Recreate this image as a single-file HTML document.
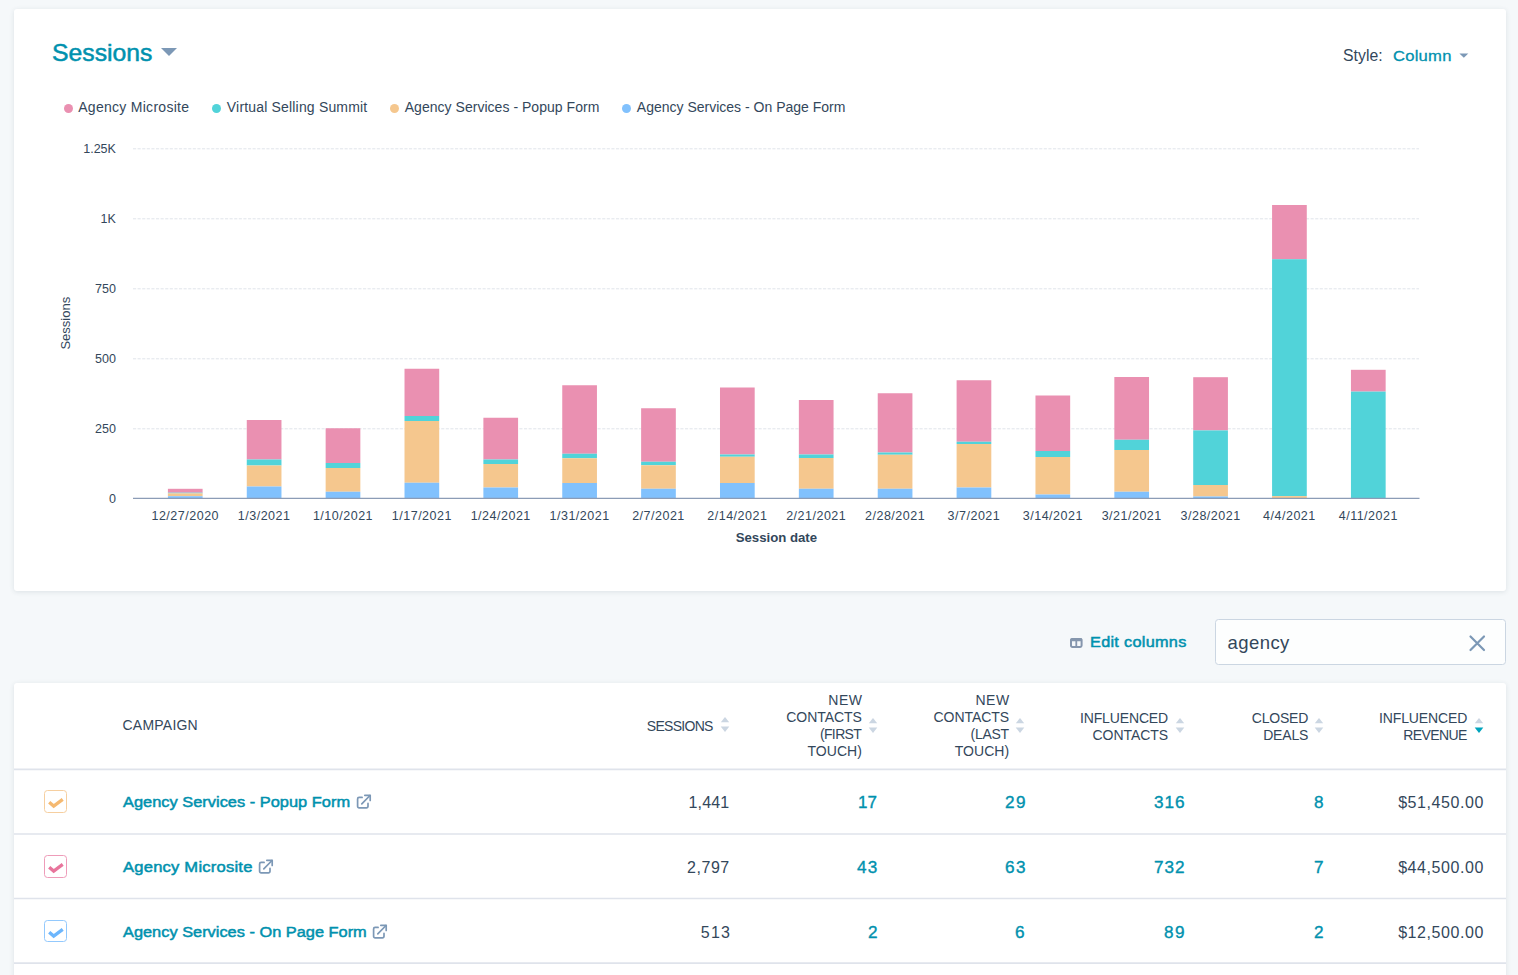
<!DOCTYPE html>
<html><head><meta charset="utf-8"><title>Sessions</title>
<style>
*{box-sizing:border-box;margin:0;padding:0}
html,body{width:1518px;height:975px;overflow:hidden;background:#f5f8fa;font-family:"Liberation Sans",sans-serif;color:#33475b}
.abs{position:absolute}
.t{white-space:nowrap;line-height:20px}
.card{position:absolute;background:#fff;border-radius:3px;box-shadow:0 1px 5px rgba(45,62,80,.12)}
.dot{width:9px;height:9px;border-radius:50%}
.ax{font-size:12.5px;fill:#33475b;font-family:"Liberation Sans",sans-serif}
.xl{letter-spacing:.5px}
.hr{left:14px;width:1492px;height:1.6px;background:#dfe3eb}
.cb{width:23.2px;height:22.8px;border:1.4px solid;border-radius:3.5px;background:#fff}
</style></head><body>
<div class="card" style="left:14px;top:9px;width:1492px;height:581.5px"></div>
<div class="abs t" style="left:52.31px;top:40px;font-size:23.4px;line-height:26px;transform:scaleX(1.0578);transform-origin:0 50%;letter-spacing:0.000px;font-weight:normal;color:#0091ae;-webkit-text-stroke:.5px #0091ae">Sessions</div>
<svg class="abs" style="left:160px;top:47px" width="18" height="10" viewBox="0 0 18 10"><path d="M1 1.1 H17 L9 9 Z" fill="#7c98b6"/></svg>
<div class="abs t" style="left:1343.07px;top:47px;font-size:15.8px;line-height:17px;letter-spacing:0.018px;font-weight:normal;color:#33475b;">Style:</div>
<div class="abs t" style="left:1392.64px;top:47px;font-size:15.5px;line-height:17px;transform:scaleX(1.0700);transform-origin:0 50%;letter-spacing:0.227px;font-weight:normal;color:#0091ae;-webkit-text-stroke:.3px #0091ae">Column</div>
<svg class="abs" style="left:1459px;top:53px" width="10" height="6" viewBox="0 0 10 6"><path d="M0.4 0.4 H9.3 L4.85 4.8 Z" fill="#7c98b6"/></svg>

<div class="abs dot" style="left:63.7px;top:103.5px;background:#ea90b1"></div>
<div class="abs t" style="left:78.24px;top:99px;font-size:14px;line-height:16px;letter-spacing:0.279px;font-weight:normal;color:#33475b;">Agency Microsite</div>
<div class="abs dot" style="left:212px;top:103.5px;background:#51d3d9"></div>
<div class="abs t" style="left:226.84px;top:99px;font-size:14px;line-height:16px;letter-spacing:0.176px;font-weight:normal;color:#33475b;">Virtual Selling Summit</div>
<div class="abs dot" style="left:390px;top:103.5px;background:#f5c78e"></div>
<div class="abs t" style="left:404.74px;top:99px;font-size:14px;line-height:16px;letter-spacing:0.031px;font-weight:normal;color:#33475b;">Agency Services - Popup Form</div>
<div class="abs dot" style="left:622px;top:103.5px;background:#81c1fd"></div>
<div class="abs t" style="left:636.84px;top:99px;font-size:14px;line-height:16px;letter-spacing:0.002px;font-weight:normal;color:#33475b;">Agency Services - On Page Form</div>

<svg class="abs" style="left:0;top:0" width="1518" height="600" viewBox="0 0 1518 600">
<line x1="133" x2="1419" y1="148.8" y2="148.8" stroke="#dde1e9" stroke-width="0.9" stroke-dasharray="3.1 1.5"/>
<line x1="133" x2="1419" y1="218.8" y2="218.8" stroke="#dde1e9" stroke-width="0.9" stroke-dasharray="3.1 1.5"/>
<line x1="133" x2="1419" y1="288.8" y2="288.8" stroke="#dde1e9" stroke-width="0.9" stroke-dasharray="3.1 1.5"/>
<line x1="133" x2="1419" y1="358.8" y2="358.8" stroke="#dde1e9" stroke-width="0.9" stroke-dasharray="3.1 1.5"/>
<line x1="133" x2="1419" y1="428.8" y2="428.8" stroke="#dde1e9" stroke-width="0.9" stroke-dasharray="3.1 1.5"/>
<text x="115.9" y="152.9" text-anchor="end" class="ax">1.25K</text>
<text x="115.9" y="222.9" text-anchor="end" class="ax">1K</text>
<text x="115.9" y="292.9" text-anchor="end" class="ax">750</text>
<text x="115.9" y="362.9" text-anchor="end" class="ax">500</text>
<text x="115.9" y="432.9" text-anchor="end" class="ax">250</text>
<text x="115.9" y="502.9" text-anchor="end" class="ax">0</text>
<rect x="167.90" y="488.80" width="34.7" height="3.90" fill="#ea90b1"/>
<rect x="167.90" y="492.70" width="34.7" height="0.70" fill="#51d3d9"/>
<rect x="167.90" y="493.40" width="34.7" height="2.80" fill="#f5c78e"/>
<rect x="167.90" y="496.20" width="34.7" height="1.80" fill="#81c1fd"/>
<text x="185.25" y="519.9" text-anchor="middle" class="ax xl">12/27/2020</text>
<rect x="246.77" y="420.00" width="34.7" height="39.50" fill="#ea90b1"/>
<rect x="246.77" y="459.50" width="34.7" height="6.00" fill="#51d3d9"/>
<rect x="246.77" y="465.50" width="34.7" height="21.00" fill="#f5c78e"/>
<rect x="246.77" y="486.50" width="34.7" height="11.50" fill="#81c1fd"/>
<text x="264.12" y="519.9" text-anchor="middle" class="ax xl">1/3/2021</text>
<rect x="325.64" y="428.25" width="34.7" height="34.75" fill="#ea90b1"/>
<rect x="325.64" y="463.00" width="34.7" height="5.00" fill="#51d3d9"/>
<rect x="325.64" y="468.00" width="34.7" height="23.75" fill="#f5c78e"/>
<rect x="325.64" y="491.75" width="34.7" height="6.25" fill="#81c1fd"/>
<text x="342.99" y="519.9" text-anchor="middle" class="ax xl">1/10/2021</text>
<rect x="404.51" y="368.75" width="34.7" height="47.25" fill="#ea90b1"/>
<rect x="404.51" y="416.00" width="34.7" height="5.00" fill="#51d3d9"/>
<rect x="404.51" y="421.00" width="34.7" height="61.75" fill="#f5c78e"/>
<rect x="404.51" y="482.75" width="34.7" height="15.25" fill="#81c1fd"/>
<text x="421.86" y="519.9" text-anchor="middle" class="ax xl">1/17/2021</text>
<rect x="483.38" y="417.75" width="34.7" height="41.75" fill="#ea90b1"/>
<rect x="483.38" y="459.50" width="34.7" height="4.50" fill="#51d3d9"/>
<rect x="483.38" y="464.00" width="34.7" height="23.50" fill="#f5c78e"/>
<rect x="483.38" y="487.50" width="34.7" height="10.50" fill="#81c1fd"/>
<text x="500.73" y="519.9" text-anchor="middle" class="ax xl">1/24/2021</text>
<rect x="562.25" y="385.25" width="34.7" height="68.50" fill="#ea90b1"/>
<rect x="562.25" y="453.75" width="34.7" height="4.50" fill="#51d3d9"/>
<rect x="562.25" y="458.25" width="34.7" height="24.75" fill="#f5c78e"/>
<rect x="562.25" y="483.00" width="34.7" height="15.00" fill="#81c1fd"/>
<text x="579.60" y="519.9" text-anchor="middle" class="ax xl">1/31/2021</text>
<rect x="641.12" y="408.25" width="34.7" height="53.50" fill="#ea90b1"/>
<rect x="641.12" y="461.75" width="34.7" height="3.50" fill="#51d3d9"/>
<rect x="641.12" y="465.25" width="34.7" height="23.50" fill="#f5c78e"/>
<rect x="641.12" y="488.75" width="34.7" height="9.25" fill="#81c1fd"/>
<text x="658.47" y="519.9" text-anchor="middle" class="ax xl">2/7/2021</text>
<rect x="719.99" y="387.50" width="34.7" height="67.00" fill="#ea90b1"/>
<rect x="719.99" y="454.50" width="34.7" height="2.25" fill="#51d3d9"/>
<rect x="719.99" y="456.75" width="34.7" height="26.25" fill="#f5c78e"/>
<rect x="719.99" y="483.00" width="34.7" height="15.00" fill="#81c1fd"/>
<text x="737.34" y="519.9" text-anchor="middle" class="ax xl">2/14/2021</text>
<rect x="798.86" y="400.00" width="34.7" height="54.50" fill="#ea90b1"/>
<rect x="798.86" y="454.50" width="34.7" height="3.50" fill="#51d3d9"/>
<rect x="798.86" y="458.00" width="34.7" height="30.75" fill="#f5c78e"/>
<rect x="798.86" y="488.75" width="34.7" height="9.25" fill="#81c1fd"/>
<text x="816.21" y="519.9" text-anchor="middle" class="ax xl">2/21/2021</text>
<rect x="877.73" y="393.25" width="34.7" height="59.25" fill="#ea90b1"/>
<rect x="877.73" y="452.50" width="34.7" height="2.25" fill="#51d3d9"/>
<rect x="877.73" y="454.75" width="34.7" height="34.00" fill="#f5c78e"/>
<rect x="877.73" y="488.75" width="34.7" height="9.25" fill="#81c1fd"/>
<text x="895.08" y="519.9" text-anchor="middle" class="ax xl">2/28/2021</text>
<rect x="956.60" y="380.25" width="34.7" height="61.50" fill="#ea90b1"/>
<rect x="956.60" y="441.75" width="34.7" height="2.25" fill="#51d3d9"/>
<rect x="956.60" y="444.00" width="34.7" height="43.50" fill="#f5c78e"/>
<rect x="956.60" y="487.50" width="34.7" height="10.50" fill="#81c1fd"/>
<text x="973.95" y="519.9" text-anchor="middle" class="ax xl">3/7/2021</text>
<rect x="1035.47" y="395.50" width="34.7" height="55.50" fill="#ea90b1"/>
<rect x="1035.47" y="451.00" width="34.7" height="6.00" fill="#51d3d9"/>
<rect x="1035.47" y="457.00" width="34.7" height="37.50" fill="#f5c78e"/>
<rect x="1035.47" y="494.50" width="34.7" height="3.50" fill="#81c1fd"/>
<text x="1052.82" y="519.9" text-anchor="middle" class="ax xl">3/14/2021</text>
<rect x="1114.34" y="377.00" width="34.7" height="62.75" fill="#ea90b1"/>
<rect x="1114.34" y="439.75" width="34.7" height="10.25" fill="#51d3d9"/>
<rect x="1114.34" y="450.00" width="34.7" height="41.75" fill="#f5c78e"/>
<rect x="1114.34" y="491.75" width="34.7" height="6.25" fill="#81c1fd"/>
<text x="1131.69" y="519.9" text-anchor="middle" class="ax xl">3/21/2021</text>
<rect x="1193.21" y="377.20" width="34.7" height="53.20" fill="#ea90b1"/>
<rect x="1193.21" y="430.40" width="34.7" height="54.60" fill="#51d3d9"/>
<rect x="1193.21" y="485.00" width="34.7" height="11.50" fill="#f5c78e"/>
<rect x="1193.21" y="496.50" width="34.7" height="1.50" fill="#81c1fd"/>
<text x="1210.56" y="519.9" text-anchor="middle" class="ax xl">3/28/2021</text>
<rect x="1272.08" y="205.00" width="34.7" height="54.20" fill="#ea90b1"/>
<rect x="1272.08" y="259.20" width="34.7" height="236.90" fill="#51d3d9"/>
<rect x="1272.08" y="496.10" width="34.7" height="1.90" fill="#f5c78e"/>
<text x="1289.43" y="519.9" text-anchor="middle" class="ax xl">4/4/2021</text>
<rect x="1350.95" y="369.80" width="34.7" height="21.80" fill="#ea90b1"/>
<rect x="1350.95" y="391.60" width="34.7" height="106.40" fill="#51d3d9"/>
<text x="1368.30" y="519.9" text-anchor="middle" class="ax xl">4/11/2021</text>
<line x1="133" x2="1419.5" y1="498.4" y2="498.4" stroke="#8c9cb6" stroke-width="1.1"/>
<text transform="translate(70,323.2) rotate(-90)" text-anchor="middle" class="ax" style="font-size:13px">Sessions</text>
</svg>
<div class="abs t" style="left:735.67px;top:530px;font-size:13.2px;line-height:15px;letter-spacing:0.008px;font-weight:bold;color:#33475b;">Session date</div>

<!-- toolbar -->
<svg class="abs" style="left:1070px;top:637.8px" width="13" height="10" viewBox="0 0 13 10"><rect x="1" y="1" width="10.6" height="8" rx="1.4" fill="none" stroke="#8596ad" stroke-width="2"/><rect x="0.4" y="0.2" width="11.8" height="3" rx="1" fill="#8596ad"/><rect x="5.4" y="2" width="1.8" height="7" fill="#8596ad"/></svg>
<div class="abs t" style="left:1090.05px;top:633px;font-size:15.2px;line-height:17px;transform:scaleX(1.0700);transform-origin:0 50%;letter-spacing:0.275px;font-weight:normal;color:#0091ae;-webkit-text-stroke:.5px #0091ae">Edit columns</div>
<div class="abs" style="left:1215px;top:619.3px;width:291px;height:45.6px;border:1.3px solid #cbd6e2;border-radius:3.5px;background:#fdfefe"></div>
<div class="abs t" style="left:1227.56px;top:632px;font-size:18.5px;line-height:21px;letter-spacing:0.428px;font-weight:normal;color:#33475b;">agency</div>
<svg class="abs" style="left:1467.5px;top:634.3px" width="19" height="19" viewBox="0 0 19 19"><path d="M2.5 2.5 L16 16 M16 2.5 L2.5 16" stroke="#7c98b6" stroke-width="2.2" stroke-linecap="round"/></svg>

<!-- table -->
<div class="card" style="left:14px;top:683px;width:1492px;height:300px;border-radius:3px 3px 0 0"></div>
<div class="abs t" style="left:122.50px;top:717px;font-size:14px;line-height:16px;letter-spacing:0.226px;font-weight:normal;color:#33475b;">CAMPAIGN</div>
<div class="abs t" style="left:646.80px;top:718px;font-size:14px;line-height:16px;letter-spacing:-0.709px;font-weight:normal;color:#33475b;">SESSIONS</div>
<svg class="abs" style="left:720px;top:715.5px" width="10" height="18" viewBox="0 0 10 18"><path d="M0.8 6.2 L5 1.1 L9.2 6.2 Z" fill="#cbd6e2"/><path d="M0.7 10.4 L9.3 10.4 L5 16 Z" fill="#cbd6e2"/></svg>
<div class="abs t" style="left:828.32px;top:692px;font-size:14px;line-height:16px;letter-spacing:0.459px;font-weight:normal;color:#33475b;">NEW</div>
<div class="abs t" style="left:786.22px;top:709px;font-size:14px;line-height:16px;letter-spacing:-0.040px;font-weight:normal;color:#33475b;">CONTACTS</div>
<div class="abs t" style="left:819.92px;top:726px;font-size:14px;line-height:16px;letter-spacing:-0.625px;font-weight:normal;color:#33475b;">(FIRST</div>
<div class="abs t" style="left:807.42px;top:743px;font-size:14px;line-height:16px;letter-spacing:0.060px;font-weight:normal;color:#33475b;">TOUCH)</div>
<svg class="abs" style="left:868.3px;top:716.5px" width="10" height="18" viewBox="0 0 10 18"><path d="M0.8 6.2 L5 1.1 L9.2 6.2 Z" fill="#cbd6e2"/><path d="M0.7 10.4 L9.3 10.4 L5 16 Z" fill="#cbd6e2"/></svg>
<div class="abs t" style="left:975.52px;top:692px;font-size:14px;line-height:16px;letter-spacing:0.459px;font-weight:normal;color:#33475b;">NEW</div>
<div class="abs t" style="left:933.52px;top:709px;font-size:14px;line-height:16px;letter-spacing:-0.054px;font-weight:normal;color:#33475b;">CONTACTS</div>
<div class="abs t" style="left:970.62px;top:726px;font-size:14px;line-height:16px;letter-spacing:-0.299px;font-weight:normal;color:#33475b;">(LAST</div>
<div class="abs t" style="left:954.72px;top:743px;font-size:14px;line-height:16px;letter-spacing:0.040px;font-weight:normal;color:#33475b;">TOUCH)</div>
<svg class="abs" style="left:1015.3px;top:716.5px" width="10" height="18" viewBox="0 0 10 18"><path d="M0.8 6.2 L5 1.1 L9.2 6.2 Z" fill="#cbd6e2"/><path d="M0.7 10.4 L9.3 10.4 L5 16 Z" fill="#cbd6e2"/></svg>
<div class="abs t" style="left:1079.92px;top:710px;font-size:14px;line-height:16px;letter-spacing:-0.131px;font-weight:normal;color:#33475b;">INFLUENCED</div>
<div class="abs t" style="left:1092.52px;top:727px;font-size:14px;line-height:16px;letter-spacing:-0.040px;font-weight:normal;color:#33475b;">CONTACTS</div>
<svg class="abs" style="left:1174.8px;top:716.5px" width="10" height="18" viewBox="0 0 10 18"><path d="M0.8 6.2 L5 1.1 L9.2 6.2 Z" fill="#cbd6e2"/><path d="M0.7 10.4 L9.3 10.4 L5 16 Z" fill="#cbd6e2"/></svg>
<div class="abs t" style="left:1251.82px;top:710px;font-size:14px;line-height:16px;letter-spacing:-0.219px;font-weight:normal;color:#33475b;">CLOSED</div>
<div class="abs t" style="left:1263.22px;top:727px;font-size:14px;line-height:16px;letter-spacing:-0.208px;font-weight:normal;color:#33475b;">DEALS</div>
<svg class="abs" style="left:1314.2px;top:716.5px" width="10" height="18" viewBox="0 0 10 18"><path d="M0.8 6.2 L5 1.1 L9.2 6.2 Z" fill="#cbd6e2"/><path d="M0.7 10.4 L9.3 10.4 L5 16 Z" fill="#cbd6e2"/></svg>
<div class="abs t" style="left:1379.02px;top:710px;font-size:14px;line-height:16px;letter-spacing:-0.131px;font-weight:normal;color:#33475b;">INFLUENCED</div>
<div class="abs t" style="left:1403.32px;top:727px;font-size:14px;line-height:16px;letter-spacing:-0.617px;font-weight:normal;color:#33475b;">REVENUE</div>
<svg class="abs" style="left:1473.5px;top:716.5px" width="10" height="18" viewBox="0 0 10 18"><path d="M0.8 6.2 L5 1.1 L9.2 6.2 Z" fill="#cbd6e2"/><path d="M0.7 10.4 L9.3 10.4 L5 16 Z" fill="#00a4bd"/></svg>
<svg class="abs" style="left:14px;top:760px" width="1492" height="215" viewBox="0 0 1492 215"><line x1="0" x2="1492" y1="9.4" y2="9.4" stroke="#dfe3eb" stroke-width="1.6"/><line x1="0" x2="1492" y1="74.0" y2="74.0" stroke="#dfe3eb" stroke-width="1.6"/><line x1="0" x2="1492" y1="138.5" y2="138.5" stroke="#dfe3eb" stroke-width="1.6"/><line x1="0" x2="1492" y1="203.1" y2="203.1" stroke="#dfe3eb" stroke-width="1.6"/></svg>
<div class="abs cb" style="left:44px;top:789.9px;border-color:#f6cfa0"></div><svg class="abs" style="left:44px;top:789.9px" width="24" height="24" viewBox="0 0 24 24"><path d="M5.2 12.2 L9.7 16.1 L18.7 9.4" fill="none" stroke="#f5b971" stroke-width="3.3" stroke-linecap="butt" stroke-linejoin="miter"/></svg>
<div class="abs t" style="left:123.04px;top:793px;font-size:15.5px;line-height:17px;transform:scaleX(1.0585);transform-origin:0 50%;letter-spacing:0.000px;font-weight:normal;color:#0091ae;-webkit-text-stroke:.5px #0091ae">Agency Services - Popup Form</div>
<svg class="abs" style="left:355.60px;top:794.00px" width="16" height="16" viewBox="0 0 16 16" fill="none" stroke="#7c98b6" stroke-width="1.7" stroke-linecap="round" stroke-linejoin="round"><path d="M6.1 3.4 H3.1 a1.5 1.5 0 0 0 -1.5 1.5 V12.3 a1.5 1.5 0 0 0 1.5 1.5 H10.5 a1.5 1.5 0 0 0 1.5 -1.5 V9.4"/><path d="M8.8 1.3 H14.2 V6.4"/><path d="M14 1.5 L5.8 9.8"/></svg>
<div class="abs t" style="left:688.54px;top:794px;font-size:16px;line-height:17px;letter-spacing:0.160px;font-weight:normal;color:#33475b;">1,441</div>
<div class="abs t" style="left:857.78px;top:794px;font-size:16px;line-height:17px;transform:scaleX(1.0625);transform-origin:0 50%;letter-spacing:0.000px;font-weight:normal;color:#0091ae;-webkit-text-stroke:.35px #0091ae">17</div>
<div class="abs t" style="left:1004.67px;top:794px;font-size:16px;line-height:17px;transform:scaleX(1.0700);transform-origin:0 50%;letter-spacing:1.292px;font-weight:normal;color:#0091ae;-webkit-text-stroke:.35px #0091ae">29</div>
<div class="abs t" style="left:1153.77px;top:794px;font-size:16px;line-height:17px;transform:scaleX(1.0700);transform-origin:0 50%;letter-spacing:0.870px;font-weight:normal;color:#0091ae;-webkit-text-stroke:.35px #0091ae">316</div>
<div class="abs t" style="left:1314.27px;top:794px;font-size:16px;line-height:17px;transform:scaleX(1.0700);transform-origin:0 50%;letter-spacing:0.000px;font-weight:normal;color:#0091ae;-webkit-text-stroke:.35px #0091ae">8</div>
<div class="abs t" style="left:1398.14px;top:794px;font-size:16px;line-height:17px;letter-spacing:0.589px;font-weight:normal;color:#33475b;">$51,450.00</div>
<div class="abs cb" style="left:44px;top:854.9px;border-color:#ee9cb9"></div><svg class="abs" style="left:44px;top:854.9px" width="24" height="24" viewBox="0 0 24 24"><path d="M5.2 12.2 L9.7 16.1 L18.7 9.4" fill="none" stroke="#e8759c" stroke-width="3.3" stroke-linecap="butt" stroke-linejoin="miter"/></svg>
<div class="abs t" style="left:123.04px;top:858px;font-size:15.5px;line-height:17px;transform:scaleX(1.0700);transform-origin:0 50%;letter-spacing:0.192px;font-weight:normal;color:#0091ae;-webkit-text-stroke:.5px #0091ae">Agency Microsite</div>
<svg class="abs" style="left:257.90px;top:859.00px" width="16" height="16" viewBox="0 0 16 16" fill="none" stroke="#7c98b6" stroke-width="1.7" stroke-linecap="round" stroke-linejoin="round"><path d="M6.1 3.4 H3.1 a1.5 1.5 0 0 0 -1.5 1.5 V12.3 a1.5 1.5 0 0 0 1.5 1.5 H10.5 a1.5 1.5 0 0 0 1.5 -1.5 V9.4"/><path d="M8.8 1.3 H14.2 V6.4"/><path d="M14 1.5 L5.8 9.8"/></svg>
<div class="abs t" style="left:687.04px;top:859px;font-size:16px;line-height:17px;letter-spacing:0.535px;font-weight:normal;color:#33475b;">2,797</div>
<div class="abs t" style="left:856.97px;top:859px;font-size:16px;line-height:17px;transform:scaleX(1.0700);transform-origin:0 50%;letter-spacing:1.105px;font-weight:normal;color:#0091ae;-webkit-text-stroke:.35px #0091ae">43</div>
<div class="abs t" style="left:1004.67px;top:859px;font-size:16px;line-height:17px;transform:scaleX(1.0700);transform-origin:0 50%;letter-spacing:1.292px;font-weight:normal;color:#0091ae;-webkit-text-stroke:.35px #0091ae">63</div>
<div class="abs t" style="left:1153.77px;top:859px;font-size:16px;line-height:17px;transform:scaleX(1.0700);transform-origin:0 50%;letter-spacing:0.870px;font-weight:normal;color:#0091ae;-webkit-text-stroke:.35px #0091ae">732</div>
<div class="abs t" style="left:1314.02px;top:859px;font-size:16px;line-height:17px;transform:scaleX(1.0700);transform-origin:0 50%;letter-spacing:0.000px;font-weight:normal;color:#0091ae;-webkit-text-stroke:.35px #0091ae">7</div>
<div class="abs t" style="left:1398.14px;top:859px;font-size:16px;line-height:17px;letter-spacing:0.589px;font-weight:normal;color:#33475b;">$44,500.00</div>
<div class="abs cb" style="left:44px;top:919.5px;border-color:#93c9fd"></div><svg class="abs" style="left:44px;top:919.5px" width="24" height="24" viewBox="0 0 24 24"><path d="M5.2 12.2 L9.7 16.1 L18.7 9.4" fill="none" stroke="#6db6fc" stroke-width="3.3" stroke-linecap="butt" stroke-linejoin="miter"/></svg>
<div class="abs t" style="left:123.05px;top:923px;font-size:15.5px;line-height:17px;transform:scaleX(1.0558);transform-origin:0 50%;letter-spacing:-0.000px;font-weight:normal;color:#0091ae;-webkit-text-stroke:.5px #0091ae">Agency Services - On Page Form</div>
<svg class="abs" style="left:372.30px;top:923.60px" width="16" height="16" viewBox="0 0 16 16" fill="none" stroke="#7c98b6" stroke-width="1.7" stroke-linecap="round" stroke-linejoin="round"><path d="M6.1 3.4 H3.1 a1.5 1.5 0 0 0 -1.5 1.5 V12.3 a1.5 1.5 0 0 0 1.5 1.5 H10.5 a1.5 1.5 0 0 0 1.5 -1.5 V9.4"/><path d="M8.8 1.3 H14.2 V6.4"/><path d="M14 1.5 L5.8 9.8"/></svg>
<div class="abs t" style="left:700.84px;top:924px;font-size:16px;line-height:17px;letter-spacing:1.192px;font-weight:normal;color:#33475b;">513</div>
<div class="abs t" style="left:867.62px;top:924px;font-size:16px;line-height:17px;transform:scaleX(1.0700);transform-origin:0 50%;letter-spacing:0.000px;font-weight:normal;color:#0091ae;-webkit-text-stroke:.35px #0091ae">2</div>
<div class="abs t" style="left:1014.92px;top:924px;font-size:16px;line-height:17px;transform:scaleX(1.0700);transform-origin:0 50%;letter-spacing:0.000px;font-weight:normal;color:#0091ae;-webkit-text-stroke:.35px #0091ae">6</div>
<div class="abs t" style="left:1163.77px;top:924px;font-size:16px;line-height:17px;transform:scaleX(1.0700);transform-origin:0 50%;letter-spacing:1.292px;font-weight:normal;color:#0091ae;-webkit-text-stroke:.35px #0091ae">89</div>
<div class="abs t" style="left:1314.27px;top:924px;font-size:16px;line-height:17px;transform:scaleX(1.0700);transform-origin:0 50%;letter-spacing:0.000px;font-weight:normal;color:#0091ae;-webkit-text-stroke:.35px #0091ae">2</div>
<div class="abs t" style="left:1398.14px;top:924px;font-size:16px;line-height:17px;letter-spacing:0.589px;font-weight:normal;color:#33475b;">$12,500.00</div>
</body></html>
